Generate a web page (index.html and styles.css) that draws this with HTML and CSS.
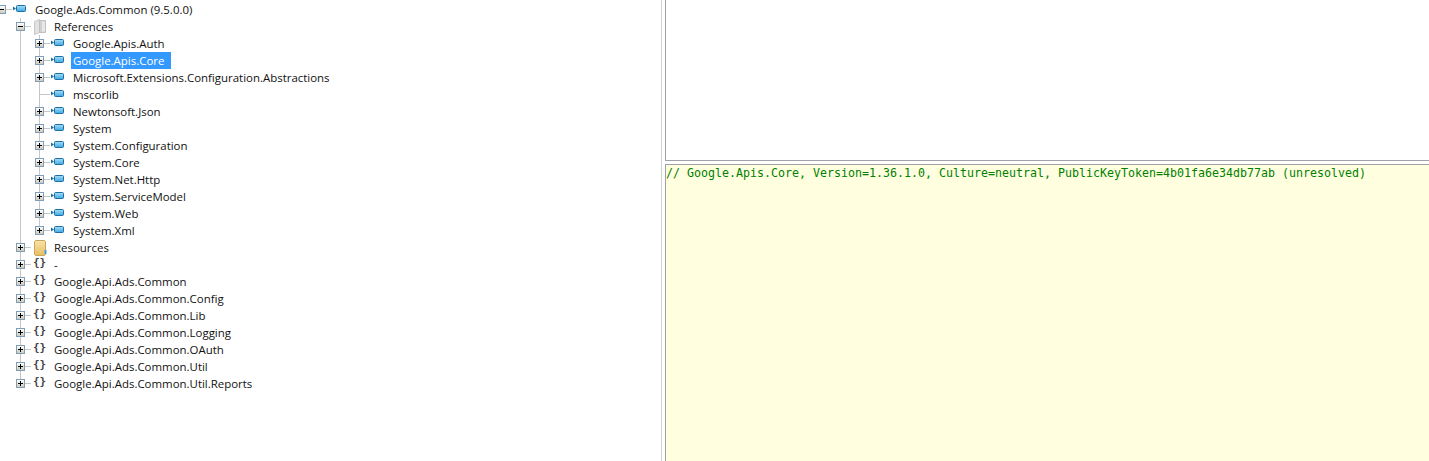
FILE: index.html
```html
<!DOCTYPE html>
<html lang="en">
<head>
    <meta charset="UTF-8">
    <title>Google.Ads.Common</title>
    <link rel="stylesheet" href="styles.css">
</head>
<body>
    <svg class="defs" width="0" height="0">
        <defs>
            <linearGradient id="gold" x1="0" y1="0" x2="0" y2="1">
                <stop offset="0" stop-color="#f8e3a8"/>
                <stop offset="1" stop-color="#e9bd62"/>
            </linearGradient>
            <linearGradient id="sky" x1="0" y1="0" x2="0" y2="1">
                <stop offset="0" stop-color="#a5def7"/>
                <stop offset="1" stop-color="#3fa9e0"/>
            </linearGradient>
        </defs>
        <symbol id="ref" viewBox="0 0 16 9">
            <path d="M2 2.500l3 2-3 2z" fill="#1c6ea4"/>
            <rect x="5.500" y="1.500" width="9" height="6" rx="1" fill="url(#sky)" stroke="#1c6ea4"/>
        </symbol>
        <symbol id="book" viewBox="0 0 14 16">
            <path d="M1.500 2.500l5-2v13l-5 2z" fill="#e2e2e2" stroke="#c8c8c8"/>
            <path d="M6.500 1.500h6v12h-6z" fill="#d0d0d0" stroke="#c0c0c0"/>
            <path d="M9 2.500h3v10h-3z" fill="#e8e8e8"/>
        </symbol>
        <symbol id="folder" viewBox="0 0 14 16">
            <path d="M1.500 1.500l1-1h9l1 1v13l-1 1h-9l-1-1z" fill="url(#gold)" stroke="#c9a65a"/>
            <path d="M12.500 10v4" stroke="#3f9fdc" stroke-width="2"/>
        </symbol>
    </svg>

    <div class="window">
        <div class="tree">
            <div class="row">
                <span class="cell"><span class="box minus"></span></span>
                <span class="icon"><svg class="ref"><use href="#ref"/></svg></span>
                <span class="label">Google.Ads.Common (9.5.0.0)</span>
            </div>
            <div class="row">
                <span class="cell"></span><span class="cell line"><span class="box minus"></span></span>
                <span class="icon"><svg class="big"><use href="#book"/></svg></span>
                <span class="label">References</span>
            </div>
            <div class="row">
                <span class="cell"></span><span class="cell line"></span><span class="cell line"><span class="box plus"></span></span>
                <span class="icon"><svg class="ref"><use href="#ref"/></svg></span>
                <span class="label">Google.Apis.Auth</span>
            </div>
            <div class="row">
                <span class="cell"></span><span class="cell line"></span><span class="cell line"><span class="box plus"></span></span>
                <span class="icon"><svg class="ref"><use href="#ref"/></svg></span>
                <span class="label selected">Google.Apis.Core</span>
            </div>
            <div class="row">
                <span class="cell"></span><span class="cell line"></span><span class="cell line"><span class="box plus"></span></span>
                <span class="icon"><svg class="ref"><use href="#ref"/></svg></span>
                <span class="label">Microsoft.Extensions.Configuration.Abstractions</span>
            </div>
            <div class="row">
                <span class="cell"></span><span class="cell line"></span><span class="cell line tick"></span>
                <span class="icon"><svg class="ref"><use href="#ref"/></svg></span>
                <span class="label">mscorlib</span>
            </div>
            <div class="row">
                <span class="cell"></span><span class="cell line"></span><span class="cell line"><span class="box plus"></span></span>
                <span class="icon"><svg class="ref"><use href="#ref"/></svg></span>
                <span class="label">Newtonsoft.Json</span>
            </div>
            <div class="row">
                <span class="cell"></span><span class="cell line"></span><span class="cell line"><span class="box plus"></span></span>
                <span class="icon"><svg class="ref"><use href="#ref"/></svg></span>
                <span class="label">System</span>
            </div>
            <div class="row">
                <span class="cell"></span><span class="cell line"></span><span class="cell line"><span class="box plus"></span></span>
                <span class="icon"><svg class="ref"><use href="#ref"/></svg></span>
                <span class="label">System.Configuration</span>
            </div>
            <div class="row">
                <span class="cell"></span><span class="cell line"></span><span class="cell line"><span class="box plus"></span></span>
                <span class="icon"><svg class="ref"><use href="#ref"/></svg></span>
                <span class="label">System.Core</span>
            </div>
            <div class="row">
                <span class="cell"></span><span class="cell line"></span><span class="cell line"><span class="box plus"></span></span>
                <span class="icon"><svg class="ref"><use href="#ref"/></svg></span>
                <span class="label">System.Net.Http</span>
            </div>
            <div class="row">
                <span class="cell"></span><span class="cell line"></span><span class="cell line"><span class="box plus"></span></span>
                <span class="icon"><svg class="ref"><use href="#ref"/></svg></span>
                <span class="label">System.ServiceModel</span>
            </div>
            <div class="row">
                <span class="cell"></span><span class="cell line"></span><span class="cell line"><span class="box plus"></span></span>
                <span class="icon"><svg class="ref"><use href="#ref"/></svg></span>
                <span class="label">System.Web</span>
            </div>
            <div class="row">
                <span class="cell"></span><span class="cell line"></span><span class="cell line-half"><span class="box plus"></span></span>
                <span class="icon"><svg class="ref"><use href="#ref"/></svg></span>
                <span class="label">System.Xml</span>
            </div>
            <div class="row">
                <span class="cell"></span><span class="cell line"><span class="box plus"></span></span>
                <span class="icon"><svg class="big"><use href="#folder"/></svg></span>
                <span class="label">Resources</span>
            </div>
            <div class="row">
                <span class="cell"></span><span class="cell line"><span class="box plus"></span></span>
                <span class="icon"><span class="braces">{}</span></span>
                <span class="label">-</span>
            </div>
            <div class="row">
                <span class="cell"></span><span class="cell line"><span class="box plus"></span></span>
                <span class="icon"><span class="braces">{}</span></span>
                <span class="label">Google.Api.Ads.Common</span>
            </div>
            <div class="row">
                <span class="cell"></span><span class="cell line"><span class="box plus"></span></span>
                <span class="icon"><span class="braces">{}</span></span>
                <span class="label">Google.Api.Ads.Common.Config</span>
            </div>
            <div class="row">
                <span class="cell"></span><span class="cell line"><span class="box plus"></span></span>
                <span class="icon"><span class="braces">{}</span></span>
                <span class="label">Google.Api.Ads.Common.Lib</span>
            </div>
            <div class="row">
                <span class="cell"></span><span class="cell line"><span class="box plus"></span></span>
                <span class="icon"><span class="braces">{}</span></span>
                <span class="label">Google.Api.Ads.Common.Logging</span>
            </div>
            <div class="row">
                <span class="cell"></span><span class="cell line"><span class="box plus"></span></span>
                <span class="icon"><span class="braces">{}</span></span>
                <span class="label">Google.Api.Ads.Common.OAuth</span>
            </div>
            <div class="row">
                <span class="cell"></span><span class="cell line"><span class="box plus"></span></span>
                <span class="icon"><span class="braces">{}</span></span>
                <span class="label">Google.Api.Ads.Common.Util</span>
            </div>
            <div class="row">
                <span class="cell"></span><span class="cell line-half"><span class="box plus"></span></span>
                <span class="icon"><span class="braces">{}</span></span>
                <span class="label">Google.Api.Ads.Common.Util.Reports</span>
            </div>
        </div>
        <div class="right">
            <div class="top-pane"></div>
            <div class="code-pane">// Google.Apis.Core, Version=1.36.1.0, Culture=neutral, PublicKeyToken=4b01fa6e34db77ab (unresolved)</div>
        </div>
    </div>
</body>
</html>
```

FILE: styles.css
```css
html, body {
    margin: 0;
    padding: 0;
    height: 100%;
    overflow: hidden;
}

.defs {
    display: block;
    height: 0;
}

.window {
    display: flex;
    height: 461px;
    background-color: #fff;
    font-family: "Open Sans", "DejaVu Sans", sans-serif;
    font-size: 11.45px;
    color: #111;
}

.tree {
    width: 661px;
    flex: none;
    overflow: hidden;
    padding-top: 1px;
    box-sizing: border-box;
}

.row {
    display: flex;
    align-items: center;
    height: 17px;
    margin-left: -8px;
}

.cell {
    position: relative;
    display: flex;
    align-items: center;
    justify-content: center;
    flex: none;
    width: 19px;
    height: 17px;
}

/* vertical tree guides */
.line::before,
.line-half::before {
    content: "";
    position: absolute;
    left: 9px;
    top: 0;
    width: 1px;
    background-color: #c6c6c6;
}

.line::before {
    bottom: 0;
}

.line-half::before {
    height: 9px;
}

.tick::after {
    content: "";
    position: absolute;
    left: 9px;
    right: 0;
    top: 8px;
    height: 1px;
    background-color: #c6c6c6;
}

.box {
    position: relative;
    z-index: 1;
    width: 9px;
    height: 9px;
    box-sizing: border-box;
    border: 1px solid #7f9db9;
    background: linear-gradient(#fff, #cfcabc);
}

.box::after {
    content: "";
    position: absolute;
    left: 1px;
    top: 3px;
    width: 5px;
    height: 1px;
    background-color: #000;
}

.plus::before {
    content: "";
    position: absolute;
    left: 3px;
    top: 1px;
    width: 1px;
    height: 5px;
    background-color: #000;
}

.icon {
    position: relative;
    display: flex;
    align-items: center;
    flex: none;
    width: 22px;
    height: 17px;
}

/* connector from expander to icon */
.icon::before {
    content: "";
    position: absolute;
    left: -5px;
    top: 8px;
    width: 6px;
    height: 1px;
    background-color: #c6c6c6;
}

.ref {
    width: 16px;
    height: 9px;
    margin-top: -2px;
}

.big {
    width: 14px;
    height: 16px;
    margin-left: 3px;
}

.braces {
    font-family: "DejaVu Sans Mono", monospace;
    font-size: 11px;
    font-weight: bold;
    color: #444;
    margin-left: 3px;
    margin-top: -4px;
}

.label {
    padding: 0 2px;
    line-height: 17px;
    white-space: nowrap;
}

.selected {
    background-color: #3399ff;
    color: #fff;
    padding-right: 7px;
}

.right {
    flex: 1;
    display: flex;
    flex-direction: column;
    padding-left: 3px;
    border-left: 1px solid #d4d4d4;
}

.top-pane {
    height: 161px;
    box-sizing: border-box;
    border-left: 1px solid #a0a0a8;
    border-bottom: 1px solid #a0a0a8;
    margin-bottom: 3px;
}

.code-pane {
    flex: 1;
    box-sizing: border-box;
    border-left: 1px solid #a0a0a8;
    border-top: 1px solid #a0a0a8;
    background-color: #ffffe0;
    color: #008000;
    font-family: "DejaVu Sans Mono", monospace;
    font-size: 11.63px;
    line-height: 16px;
    white-space: pre;
}
```
